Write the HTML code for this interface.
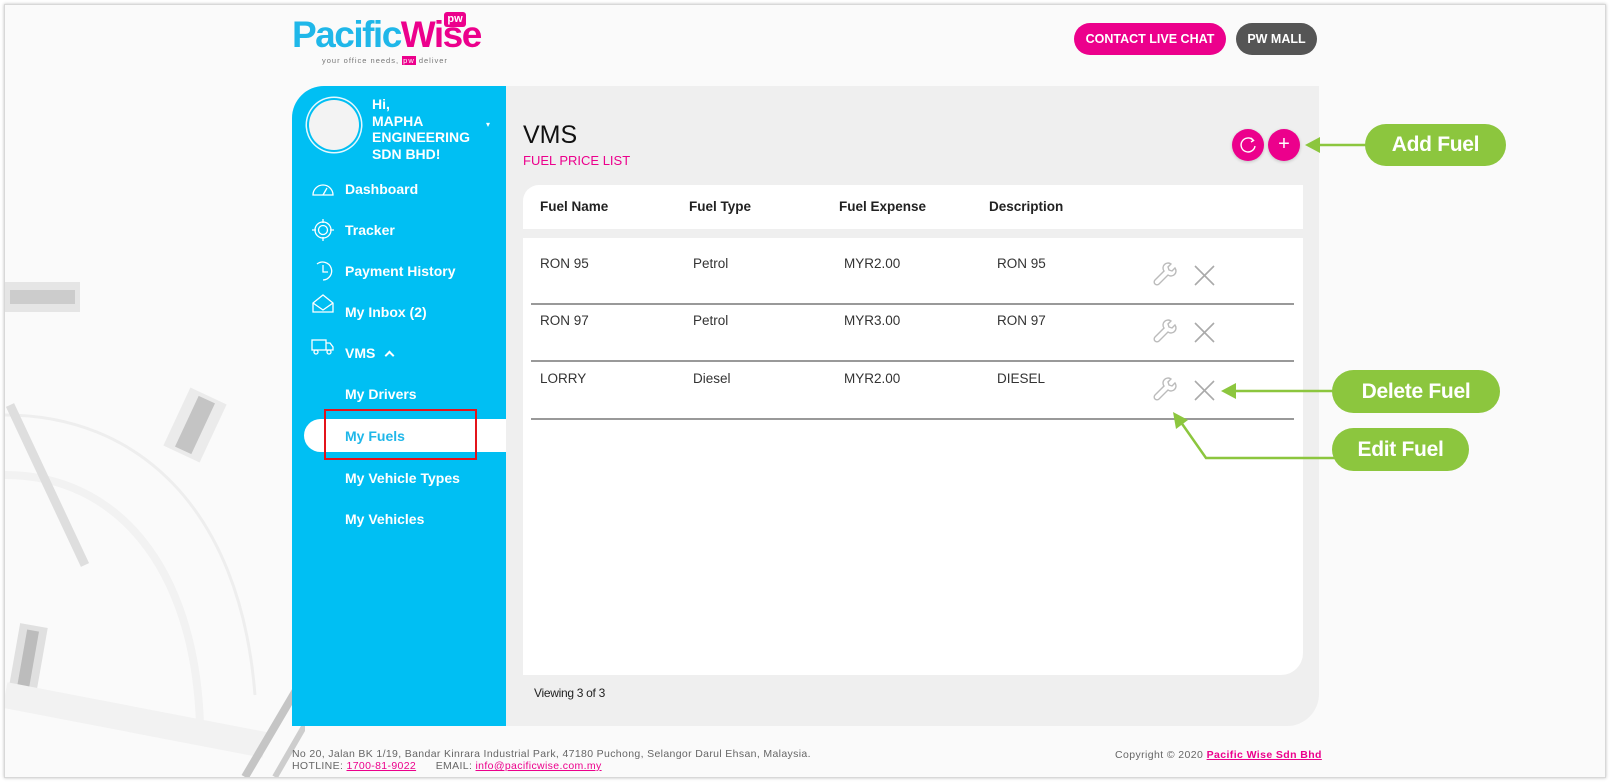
<!DOCTYPE html>
<html><head><meta charset="utf-8"><style>
*{margin:0;padding:0;box-sizing:border-box}
body{width:1610px;height:783px;background:#fff;font-family:"Liberation Sans",Arial,sans-serif;position:relative;overflow:hidden}
.frame{position:absolute;left:4px;top:4px;width:1602px;height:774px;border:1px solid #d8d8d8;box-shadow:0 0 3px rgba(0,0,0,.25);background:#fafafa;overflow:hidden}
.abs{position:absolute}
.side{left:292px;top:86px;width:214px;height:640px;background:#00bff3;border-top-left-radius:32px}
.main{left:506px;top:86px;width:813px;height:640px;background:#efefef;border-bottom-right-radius:32px}
.mi{position:absolute;left:345px;color:#fff;font-weight:bold;font-size:14px;line-height:16px}
.th{position:absolute;top:199px;font-size:13.5px;font-weight:bold;color:#222}
.td{position:absolute;font-size:13.5px;color:#333}
.line{position:absolute;left:531px;width:763px;height:1.5px;background:#999}
.pill{position:absolute;background:#8cc63e;color:#fff;font-weight:bold;font-size:21px;border-radius:22px;display:flex;align-items:center;justify-content:center;letter-spacing:-.3px}
</style></head><body>
<div class="frame"></div>
<!-- faint background art -->
<svg class="abs" style="left:5px;top:5px;opacity:.55" width="300" height="772">
<g fill="none">
<path d="M0 410 C130 410 235 500 250 690" stroke="#e6e6e6" stroke-width="3"/>
<path d="M0 470 C110 470 190 560 195 720" stroke="#ececec" stroke-width="8"/>
</g>
<rect x="0" y="277" width="75" height="30" fill="#d5d5d5"/>
<rect x="5" y="285" width="65" height="14" fill="#a8a8a8"/>
<g transform="translate(190,420) rotate(-65)"><rect x="-32" y="-20" width="64" height="40" fill="#e0e0e0"/><rect x="-28" y="-9" width="56" height="18" fill="#999"/></g>
<g transform="translate(22,660) rotate(-80)"><rect x="-40" y="-14" width="80" height="28" fill="#ccc"/><rect x="-35" y="-6" width="70" height="12" fill="#8a8a8a"/></g>
<path d="M5 400 L80 560" stroke="#c8c8c8" stroke-width="9"/>
<path d="M0 690 L260 740" stroke="#ececec" stroke-width="26"/>
<path d="M240 772 L300 670" stroke="#9a9a9a" stroke-width="8"/>
<path d="M270 772 L300 720" stroke="#aaa" stroke-width="6"/>
</svg>
<!-- logo -->
<div class="abs" style="left:292px;top:14px;font-size:37px;font-weight:bold;letter-spacing:-1.5px;line-height:42px"><span style="color:#1fb7e9">Pacific</span><span style="color:#ec008c">Wise</span></div>
<div class="abs" style="left:444px;top:12px;width:22px;height:15px;background:#ec008c;color:#fff;font-size:11px;font-weight:bold;text-align:center;line-height:14px;border-radius:3px">pw</div>
<div class="abs" style="left:322px;top:56px;font-size:7.5px;color:#777;letter-spacing:1px">your office needs, <span style="background:#ec008c;color:#fff;padding:0 1px">pw</span> deliver</div>
<div class="abs" style="left:1074px;top:23px;width:152px;height:32px;background:#ec008c;border-radius:16px;color:#fff;font-size:12.5px;font-weight:bold;text-align:center;line-height:32px">CONTACT LIVE CHAT</div>
<div class="abs" style="left:1236px;top:23px;width:81px;height:32px;background:#555;border-radius:16px;color:#fff;font-size:12.5px;font-weight:bold;text-align:center;line-height:32px">PW MALL</div>
<div class="abs side"></div>
<div class="abs main"></div>
<!-- avatar -->
<div class="abs" style="left:309px;top:100px;width:50px;height:50px;border-radius:50%;background:#f3f3f3;box-shadow:0 0 0 2px #00bff3,0 0 0 3.5px #e6f8fe"></div>
<div class="abs" style="left:372px;top:96px;color:#fff;font-weight:bold;font-size:14px;line-height:16.5px">Hi,<br>MAPHA<br>ENGINEERING<br>SDN BHD!</div>
<div class="abs" style="left:486px;top:120px;color:#fff;font-size:8px">▾</div>
<!-- icons -->
<svg class="abs" style="left:311px;top:178px" width="26" height="360" fill="none" stroke="#fff" stroke-width="1.3">
<path d="M2 17 A10 10 0 0 1 22 17 Z"/><path d="M12 17 L16 10"/>
<circle cx="12" cy="52" r="8"/><circle cx="12" cy="52" r="4.5"/><path d="M12 41v4M12 59v4M1 52h4M19 52h4"/>
<path d="M6 86 A9 9 0 1 1 12 102"/><path d="M12 87v7h5"/>
<path d="M2 125l10-8 10 8v9H2z"/><path d="M2 125l10 7 10-7"/>
<rect x="1" y="162" width="14" height="10"/><path d="M15 165h4l3 4v3h-7"/><circle cx="5" cy="174" r="2"/><circle cx="18" cy="174" r="2"/>
</svg>
<div class="mi" style="top:181px">Dashboard</div>
<div class="mi" style="top:222px">Tracker</div>
<div class="mi" style="top:263px">Payment History</div>
<div class="mi" style="top:304px">My Inbox (2)</div>
<div class="mi" style="top:345px">VMS &nbsp;<span style="display:inline-block;width:7px;height:7px;border-left:2.5px solid #fff;border-top:2.5px solid #fff;transform:rotate(45deg);margin-left:3px;position:relative;top:1px"></span></div>
<div class="mi" style="top:386px">My Drivers</div>
<div class="abs" style="left:304px;top:419px;width:202px;height:33px;background:#fff;border-radius:17px 0 0 17px"></div>
<div class="mi" style="top:428px;color:#1fb7e9">My Fuels</div>
<div class="abs" style="left:324px;top:409px;width:153px;height:51px;border:2px solid #e3141b"></div>
<div class="mi" style="top:470px">My Vehicle Types</div>
<div class="mi" style="top:511px">My Vehicles</div>
<!-- main -->
<div class="abs" style="left:523px;top:121px;font-size:25px;color:#111">VMS</div>
<div class="abs" style="left:523px;top:153px;font-size:13px;color:#ec008c">FUEL PRICE LIST</div>
<div class="abs" style="left:1232px;top:129px;width:32px;height:32px;border-radius:50%;background:#ec008c;box-shadow:0 1px 3px rgba(0,0,0,.2)"></div>
<svg class="abs" style="left:1232px;top:129px" width="32" height="32" fill="none" stroke="#fff" stroke-width="1.4"><path d="M21 11 A7 7 0 1 0 23 17"/><path d="M19 9l2.5 2.5L19 13"/></svg>
<div class="abs" style="left:1268px;top:129px;width:32px;height:32px;border-radius:50%;background:#ec008c;color:#fff;text-align:center;line-height:31px;font-size:20px;box-shadow:0 1px 3px rgba(0,0,0,.2)">+</div>
<div class="abs" style="left:523px;top:185px;width:780px;height:44px;background:#fff;border-top-left-radius:16px"></div>
<div class="abs" style="left:523px;top:238px;width:780px;height:437px;background:#fff;border-bottom-right-radius:22px"></div>
<div class="th" style="left:540px">Fuel Name</div>
<div class="th" style="left:689px">Fuel Type</div>
<div class="th" style="left:839px">Fuel Expense</div>
<div class="th" style="left:989px">Description</div>
<div class="td" style="left:540px;top:256px">RON 95</div><div class="td" style="left:693px;top:256px">Petrol</div><div class="td" style="left:844px;top:256px">MYR2.00</div><div class="td" style="left:997px;top:256px">RON 95</div>
<div class="line" style="top:303px"></div>
<div class="td" style="left:540px;top:313px">RON 97</div><div class="td" style="left:693px;top:313px">Petrol</div><div class="td" style="left:844px;top:313px">MYR3.00</div><div class="td" style="left:997px;top:313px">RON 97</div>
<div class="line" style="top:360px"></div>
<div class="td" style="left:540px;top:371px">LORRY</div><div class="td" style="left:693px;top:371px">Diesel</div><div class="td" style="left:844px;top:371px">MYR2.00</div><div class="td" style="left:997px;top:371px">DIESEL</div>
<div class="line" style="top:418px"></div>
<svg class="abs" style="left:1150px;top:258px" width="70" height="150" fill="none" stroke="#bbb" stroke-width="1.4">
<g id="r"><path d="M9 26 L18 17 A5 5 0 0 0 25 10 L22 13 L19 12 L18 9 L21 6 A5 5 0 0 0 14 13 L5 22 A2.8 2.8 0 0 0 9 26Z"/><path d="M45 8 L64 27 M64 8 L45 27" stroke="#aaa" stroke-width="1.6"/></g>
<use href="#r" y="57"/><use href="#r" y="115"/>
</svg>
<div class="abs" style="left:534px;top:686px;font-size:12px;color:#222;letter-spacing:-.3px">Viewing 3 of 3</div>
<!-- annotations -->
<svg class="abs" style="left:1150px;top:120px" width="220" height="360" fill="#8cc63e" stroke="#8cc63e" stroke-width="2.5">
<path d="M163 25 H220" fill="none"/><path d="M155 25 L170 17 L170 33Z" stroke="none"/>
<path d="M80 271 H190" fill="none"/><path d="M71 271 L86 263 L86 279Z" stroke="none"/>
<path d="M190 338 H56 L28 298" fill="none"/><path d="M23 292 L38 300 L26 309Z" stroke="none"/>
</svg>
<div class="pill" style="left:1365px;top:124px;width:141px;height:42px">Add Fuel</div>
<div class="pill" style="left:1332px;top:370px;width:168px;height:43px">Delete Fuel</div>
<div class="pill" style="left:1332px;top:428px;width:137px;height:43px">Edit Fuel</div>
<!-- footer -->
<div class="abs" style="left:292px;top:748px;font-size:10.5px;color:#666;line-height:12px;letter-spacing:.35px">No 20, Jalan BK 1/19, Bandar Kinrara Industrial Park, 47180 Puchong, Selangor Darul Ehsan, Malaysia.<br>HOTLINE: <u style="color:#ec008c">1700-81-9022</u> &nbsp;&nbsp;&nbsp;&nbsp; EMAIL: <u style="color:#ec008c">info@pacificwise.com.my</u></div>
<div class="abs" style="left:1115px;top:749px;font-size:10.5px;color:#666;letter-spacing:.4px">Copyright © 2020 <u style="color:#ec008c;font-weight:bold">Pacific Wise Sdn Bhd</u></div>
</body></html>
